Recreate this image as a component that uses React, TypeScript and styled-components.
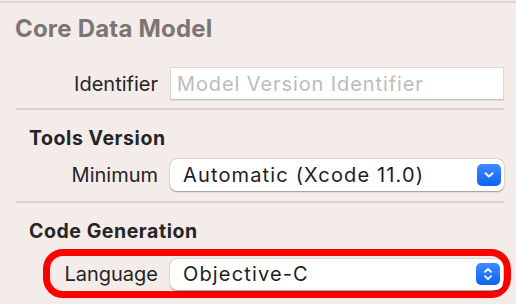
import React from "react";
import styled, { createGlobalStyle } from "styled-components";

const Global = createGlobalStyle`
  html, body { margin: 0; padding: 0; }
  body {
    background: #f4ece9;
    font-family: Inter, "Noto Sans", "Liberation Sans", sans-serif;
    -webkit-font-smoothing: antialiased;
  }
`;

const Page = styled.div`
  width: 516px;
  height: 304px;
  overflow: hidden;
  background: #f4ece9;
  display: flex;
  flex-direction: column;
`;

const TopRule = styled.div`
  height: 2px;
  margin-top: 1px;
  background: #ddd4d0;
`;

const Title = styled.div`
  margin: 11px 0 0 15px;
  height: 30px;
  line-height: 30px;
  font-size: 24px;
  font-weight: 700;
  color: #7b7675;
  letter-spacing: 0.2px;
`;

const Row = styled.div<{ $top: number }>`
  display: flex;
  align-items: center;
  gap: 12px;
  margin-top: ${(p) => p.$top}px;
`;

const Label = styled.div<{ $width: number }>`
  width: ${(p) => p.$width}px;
  text-align: right;
  font-size: 20px;
  letter-spacing: 0;
  color: #262424;
  flex: none;
`;

const TextField = styled.div`
  box-sizing: border-box;
  width: 334px;
  height: 33px;
  background: #ffffff;
  border: 1px solid #dcd6d4;
  border-bottom-color: #c9c3c1;
  box-shadow: 0 1px 0.5px rgba(0, 0, 0, 0.08);
  display: flex;
  align-items: center;
  padding-left: 6px;
  font-size: 20px;
  letter-spacing: 0.9px;
  color: #bfbbba;
`;

const Separator = styled.div<{ $top: number }>`
  margin: ${(p) => p.$top}px 0 0 16px;
  width: 488px;
  height: 2px;
  background: #dcd3cf;
`;

const SectionHeader = styled.div<{ $top: number }>`
  margin: ${(p) => p.$top}px 0 0 29px;
  height: 24px;
  line-height: 24px;
  font-size: 19.5px;
  font-weight: 700;
  letter-spacing: 0.55px;
  color: #262424;
`;

const Popup = styled.div<{ $width: number; $height: number }>`
  box-sizing: border-box;
  width: ${(p) => p.$width}px;
  height: ${(p) => p.$height}px;
  background: #ffffff;
  border-radius: 7px;
  box-shadow: 0 0.5px 1.5px rgba(0, 0, 0, 0.35), 0 0 0 0.5px rgba(0, 0, 0, 0.06);
  display: flex;
  align-items: center;
  justify-content: space-between;
  padding: 0 3px 0 13px;
  font-size: 20px;
  letter-spacing: 1.15px;
  color: #1f1d1d;
`;

const Stepper = styled.div`
  width: 24px;
  height: 22px;
  border-radius: 5px;
  background: linear-gradient(#3d8cff, #0d63f3);
  display: flex;
  align-items: center;
  justify-content: center;
`;

const Highlight = styled.div`
  margin: 6px 0 0 43px;
  width: 468px;
  height: 49px;
  box-sizing: border-box;
  border: 7px solid #ff0000;
  border-radius: 20px;
  display: flex;
  align-items: center;
  gap: 12px;
  padding-top: 1px;
`;

const ChevronDown = () => (
  <svg width="12" height="8" viewBox="0 0 12 8">
    <path d="M2.5 2.2 L6 5.6 L9.5 2.2" fill="none" stroke="#fff" strokeWidth="1.9" strokeLinecap="round" strokeLinejoin="round" />
  </svg>
);

const ChevronUpDown = () => (
  <svg width="12" height="16" viewBox="0 0 12 16">
    <path d="M3 5.8 L6 2.8 L9 5.8" fill="none" stroke="#fff" strokeWidth="1.8" strokeLinecap="round" strokeLinejoin="round" />
    <path d="M3 10.2 L6 13.2 L9 10.2" fill="none" stroke="#fff" strokeWidth="1.8" strokeLinecap="round" strokeLinejoin="round" />
  </svg>
);

export default function App() {
  return (
    <>
      <Global />
      <Page>
        <TopRule />
        <Title>Core Data Model</Title>
        <Row $top={23}>
          <Label $width={158}>Identifier</Label>
          <TextField>Model Version Identifier</TextField>
        </Row>
        <Separator $top={8} />
        <SectionHeader $top={16}>Tools Version</SectionHeader>
        <Row $top={9}>
          <Label $width={158}>Minimum</Label>
          <Popup $width={334} $height={32}>
            <span>Automatic (Xcode 11.0)</span>
            <Stepper>
              <ChevronDown />
            </Stepper>
          </Popup>
        </Row>
        <Separator $top={10} />
        <SectionHeader $top={16}>Code Generation</SectionHeader>
        <Highlight>
          <Label $width={108}>Language</Label>
          <Popup $width={333} $height={31}>
            <span>Objective-C</span>
            <Stepper>
              <ChevronUpDown />
            </Stepper>
          </Popup>
        </Highlight>
      </Page>
    </>
  );
}
